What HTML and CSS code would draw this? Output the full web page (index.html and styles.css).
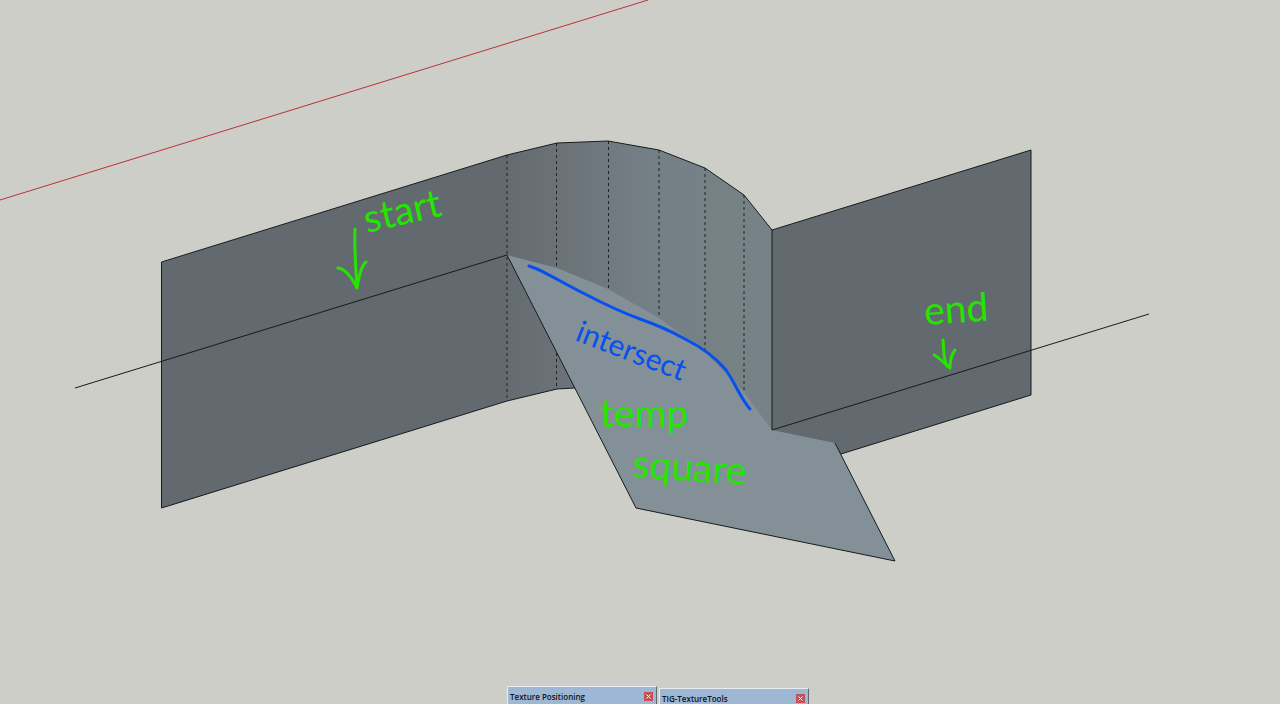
FILE: index.html
```html
<!DOCTYPE html>
<html lang="en">
<head>
    <meta charset="UTF-8">
    <meta name="viewport" content="width=device-width, initial-scale=1.0">
    <title>Texture Positioning</title>
    <link rel="stylesheet" href="styles.css">
</head>
<body>
    <main class="viewport">
        <svg class="model" viewBox="0 0 1280 704" preserveAspectRatio="xMidYMid slice">
            <defs>
                <linearGradient id="curveShade" gradientUnits="userSpaceOnUse" x1="507" y1="0" x2="772" y2="0">
                    <stop offset="0" stop-color="#646b71"/>
                    <stop offset="0.25" stop-color="#6c747a"/>
                    <stop offset="0.55" stop-color="#758086"/>
                    <stop offset="1" stop-color="#778287"/>
                </linearGradient>
            </defs>

            <!-- Red axis -->
            <path class="axis" d="M0 200L648 0"/>

            <!-- Wall faces -->
            <path class="wall" d="M162 262L507 155V401L162 508Z"/>
            <path fill="url(#curveShade)" d="M507 155L557 143L608 141L659 150L705 168L744 195L772 230V431H600L575 388L557 389L507 401Z"/>
            <path class="wall" d="M772 230L1031 150V395L841 454L772 440Z"/>

            <!-- Soft edges of the curve -->
            <path class="soft-edge" d="M507 155V401M556.500 143V389M608.500 141V290M659 150V318M705 168V353M744 195V392"/>

            <!-- Temporary square -->
            <path class="square" d="M507 255L557 268L608 289L659 318L705 352L744 392L772 430L835 443L895 561L636 508Z"/>

            <!-- Outlines -->
            <path class="edge" d="M507 155L161.500 262V508L507 401L557 389L575 388M507 155L557 143L608 141L659 150L705 168L744 195L772 230L1031 150V395L841 454M772 230V430"/>
            <path class="edge" d="M75 388L507 255L636 508L895 561L835 443M772 430L1149 314"/>

            <!-- Notes -->
            <g class="ink green">
                <path d="M355 229C354 247 356 269 357 288M338 268C346 269 352 278 357 288C359 277 361 266 366 262"/>
                <path d="M943 340C944 349 943 359 947 366M934 355C940 358 944 363 950 368C950 361 951 355 955 350"/>
            </g>
            <path class="ink blue" d="M529 266C541 269 566 285 583 293C604 304 618 311 640 319C657 325 671 331 685 339C701 347 717 359 726 370C735 383 741 399 750 409"/>
            <text class="note large green-text" transform="translate(367 233) rotate(-13)">start</text>
            <text class="note large green-text" transform="translate(925 325) rotate(-4)">end</text>
            <text class="note large green-text" transform="translate(600 427)">temp</text>
            <text class="note large green-text" transform="translate(632 477) rotate(4)">square</text>
            <text class="note blue-text" transform="translate(574 340) rotate(21)">intersect</text>
        </svg>

        <section class="toolbar positioning">
            <h2>Texture Positioning</h2>
            <button type="button" aria-label="Close Texture Positioning"><svg viewBox="0 0 9 9"><path d="M2.500 2.500L6.500 6.500M6.500 2.500L2.500 6.500"/></svg></button>
        </section>
        <section class="toolbar texture-tools">
            <h2>TIG-TextureTools</h2>
            <button type="button" aria-label="Close TIG-TextureTools"><svg viewBox="0 0 9 9"><path d="M2.500 2.500L6.500 6.500M6.500 2.500L2.500 6.500"/></svg></button>
        </section>
    </main>
</body>
</html>
```
FILE: styles.css
```css
body { margin: 0; background: #cdcec8; }
.viewport { position: relative; height: 100vh; overflow: hidden; }

/* Model */
.model { display: block; width: 100%; height: 100%; }
.axis { fill: none; stroke: #bd3036; stroke-width: 1; }
.wall { fill: #62696f; }
.square { fill: #839097; }
.edge { fill: none; stroke: #181b1d; stroke-width: 1; stroke-linejoin: round; }
.soft-edge { fill: none; stroke: #202427; stroke-width: 1; stroke-dasharray: 3 3; }

/* Notes */
.ink { fill: none; stroke-width: 3; stroke-linecap: round; stroke-linejoin: round; }
.green { stroke: #24e500; }
.blue { stroke: #0550ee; }
.note { font-family: Lato, "Liberation Sans", sans-serif; font-size: 30px; }
.large { font-size: 39px; }
.green-text { fill: #24e500; }
.blue-text { fill: #0550ee; }

/* Floating toolbars */
.toolbar { position: absolute; display: flex; align-items: center; justify-content: space-between; box-sizing: border-box; width: 150px; height: 24px; padding: 0 3px 3px 2px; border: 1px solid #e9edf1; border-right-color: #60686f; background: #9db7d5; }
.toolbar h2 { margin: 0; font: 600 8px/16px "Open Sans", sans-serif; color: #101418; white-space: nowrap; }
.toolbar button { width: 9px; height: 9px; padding: 0; border: 0; background: #c94f54; }
.toolbar button svg { display: block; width: 9px; height: 9px; fill: none; stroke: #fff; stroke-width: 1; }
.positioning { left: 507px; bottom: -6px; }
.texture-tools { left: 659px; bottom: -8px; }
```
